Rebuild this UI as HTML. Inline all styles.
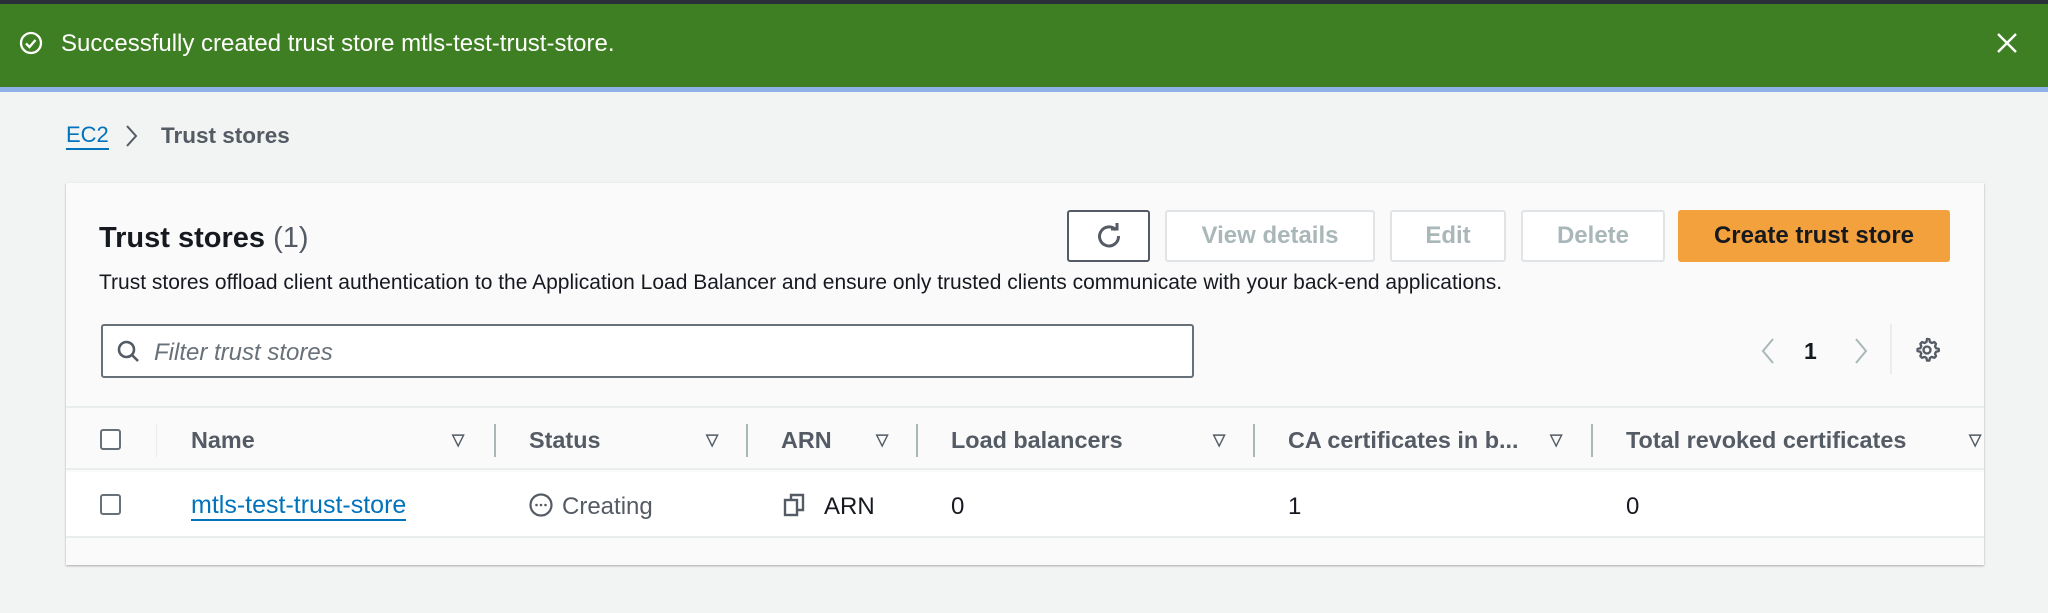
<!DOCTYPE html>
<html><head><meta charset="utf-8"><style>
*{box-sizing:border-box;margin:0;padding:0}
body{width:2048px;height:613px;overflow:hidden;background:#f2f3f3;font-family:"Liberation Sans",sans-serif;color:#16191f;position:relative}
.a{position:absolute;white-space:nowrap}
.banner{left:0;top:0;width:2048px;height:87px;background:#3f7f23;border-top:4px solid #2a2f3a}
.blue{left:0;top:87px;width:2048px;height:5px;background:#8fb1ea}
.btxt{left:61px;top:30px;color:#fff;font-size:24px}
.panel{left:66px;top:183px;width:1918px;height:382px;background:#fafafa;box-shadow:0 1px 2px rgba(0,0,0,.3);overflow:hidden}
.btn{top:27px;height:52px;border:2px solid #e1e4e6;border-radius:3px;background:#fff;color:#aab7b8;font-weight:bold;font-size:24px;display:flex;align-items:center;justify-content:center}
.hdr{left:0;top:223px;width:100%;height:64px;border-top:2px solid #eaeded;border-bottom:2px solid #eaeded;background:#fafafa}
.row{left:0;top:289px;width:100%;height:66px;background:#fff;border-bottom:2px solid #eaeded}
.h{top:19px;font-size:23.4px;font-weight:bold;color:#545b64}
.s{top:22px;font-size:16px;font-weight:bold;color:#545b64}
.d{top:21px;font-size:24px;color:#16191f}
.div{top:16px;width:2px;height:33px;background:#aab7b8}
.cb{width:21px;height:21px;border:2px solid #687078;border-radius:3px;background:#fff}
</style></head><body>
<div class="a banner"></div>
<div class="a blue"></div>
<svg class="a" style="left:19px;top:31px" width="24" height="24" viewBox="0 0 24 24"><circle cx="12" cy="12" r="10" fill="none" stroke="#fff" stroke-width="2.3"/><path d="M7 12.5l3.5 3.5 6-7" fill="none" stroke="#fff" stroke-width="2.3"/></svg>
<div class="a btxt">Successfully created trust store mtls-test-trust-store.</div>
<svg class="a" style="left:1996px;top:32px" width="22" height="22" viewBox="0 0 22 22"><path d="M2 2l18 18M20 2L2 20" stroke="#fff" stroke-width="2.4"/></svg>
<div class="a" style="left:66px;top:122px;font-size:22px;color:#0073bb;border-bottom:2px solid #0073bb;line-height:26px">EC2</div>
<svg class="a" style="left:124px;top:124px" width="14" height="24" viewBox="0 0 14 24"><path d="M3 2l9 10-9 10" fill="none" stroke="#545b64" stroke-width="2"/></svg>
<div class="a" style="left:161px;top:123px;font-size:22.5px;font-weight:bold;color:#545b64">Trust stores</div>
<div class="a panel">
 <div class="a" style="left:33px;top:39px;font-size:29px;font-weight:bold;color:#16191f">Trust stores <span style="font-weight:normal;color:#545b64">(1)</span></div>
 <div class="a" style="left:33px;top:88px;font-size:21px;color:#16191f">Trust stores offload client authentication to the Application Load Balancer and ensure only trusted clients communicate with your back-end applications.</div>
 <div class="a btn" style="left:1001px;width:83px;border-color:#545b64">
  <svg width="30" height="30" viewBox="0 0 30 30"><path d="M22 9A9.5 9.5 0 1 0 24.5 15" fill="none" stroke="#545b64" stroke-width="3"/><path d="M17 8h6V2" fill="none" stroke="#545b64" stroke-width="3"/></svg></div>
 <div class="a btn" style="left:1099px;width:210px">View details</div>
 <div class="a btn" style="left:1324px;width:116px">Edit</div>
 <div class="a btn" style="left:1455px;width:144px">Delete</div>
 <div class="a btn" style="left:1612px;width:272px;background:#f2a13c;border-color:#f2a13c;color:#16191f">Create trust store</div>
 <div class="a" style="left:35px;top:141px;width:1093px;height:54px;border:2px solid #687078;border-radius:3px;background:#fff"></div>
 <svg class="a" style="left:50px;top:156px" width="26" height="26" viewBox="0 0 26 26"><circle cx="10.5" cy="10.5" r="7.5" fill="none" stroke="#545b64" stroke-width="2.6"/><path d="M16 16l6 6" stroke="#545b64" stroke-width="2.6"/></svg>
 <div class="a" style="left:88px;top:156px;font-size:24px;font-style:italic;color:#687078">Filter trust stores</div>
 <svg class="a" style="left:1694px;top:154px" width="16" height="28" viewBox="0 0 16 28"><path d="M13 2L3 14l10 12" fill="none" stroke="#aab7b8" stroke-width="2"/></svg>
 <div class="a" style="left:1738px;top:155px;font-size:23px;font-weight:bold">1</div>
 <svg class="a" style="left:1787px;top:154px" width="16" height="28" viewBox="0 0 16 28"><path d="M3 2l10 12-10 12" fill="none" stroke="#aab7b8" stroke-width="2"/></svg>
 <div class="a" style="left:1824px;top:141px;width:2px;height:50px;background:#eaeded"></div>
 <svg class="a" style="left:1847px;top:153px" width="28" height="28" viewBox="0 0 24 24"><path d="M12 2.5l2 .3.5 2.3 1.6.9 2.2-.8 1.4 1.5-.8 2.2.9 1.6 2.3.5v2l-2.3.5-.9 1.6.8 2.2-1.4 1.4-2.2-.8-1.6.9-.5 2.3h-2l-.5-2.3-1.6-.9-2.2.8-1.4-1.4.8-2.2-.9-1.6-2.3-.5v-2l2.3-.5.9-1.6-.8-2.2 1.4-1.5 2.2.8 1.6-.9.5-2.3z" fill="none" stroke="#545b64" stroke-width="2" stroke-linejoin="round"/><circle cx="12" cy="12" r="3" fill="none" stroke="#545b64" stroke-width="2"/></svg>
 <div class="a hdr">
  <div class="a cb" style="left:34px;top:21px"></div>
  <div class="a" style="left:90px;top:16px;width:1px;height:33px;background:#eaeded"></div>
  <div class="a h" style="left:125px">Name</div><div class="a s" style="left:386px">▽</div><div class="a div" style="left:428px"></div>
  <div class="a h" style="left:463px">Status</div><div class="a s" style="left:640px">▽</div><div class="a div" style="left:680px"></div>
  <div class="a h" style="left:715px">ARN</div><div class="a s" style="left:810px">▽</div><div class="a div" style="left:850px"></div>
  <div class="a h" style="left:885px">Load balancers</div><div class="a s" style="left:1147px">▽</div><div class="a div" style="left:1187px"></div>
  <div class="a h" style="left:1222px">CA certificates in b...</div><div class="a s" style="left:1484px">▽</div><div class="a div" style="left:1525px"></div>
  <div class="a h" style="left:1560px">Total revoked certificates</div><div class="a s" style="left:1903px">▽</div>
 </div>
 <div class="a row">
  <div class="a cb" style="left:34px;top:22px"></div>
  <div class="a d" style="left:125px;color:#0073bb;border-bottom:2px solid #0073bb;line-height:28px;top:19px;font-size:25px">mtls-test-trust-store</div>
  <svg class="a" style="left:462px;top:20px" width="26" height="26" viewBox="0 0 26 26"><circle cx="13" cy="13" r="10.5" fill="none" stroke="#545b64" stroke-width="2.2"/><circle cx="8.5" cy="13" r="1.3" fill="#545b64"/><circle cx="13" cy="13" r="1.3" fill="#545b64"/><circle cx="17.5" cy="13" r="1.3" fill="#545b64"/></svg>
  <div class="a d" style="left:496px;color:#545b64">Creating</div>
  <svg class="a" style="left:717px;top:20px" width="24" height="26" viewBox="0 0 24 26"><rect x="2" y="8" width="12" height="15" fill="none" stroke="#545b64" stroke-width="2.4"/><path d="M8 8V3h12v15h-6" fill="none" stroke="#545b64" stroke-width="2.4"/></svg>
  <div class="a d" style="left:758px">ARN</div>
  <div class="a d" style="left:885px">0</div>
  <div class="a d" style="left:1222px">1</div>
  <div class="a d" style="left:1560px">0</div>
 </div>
</div>
</body></html>
